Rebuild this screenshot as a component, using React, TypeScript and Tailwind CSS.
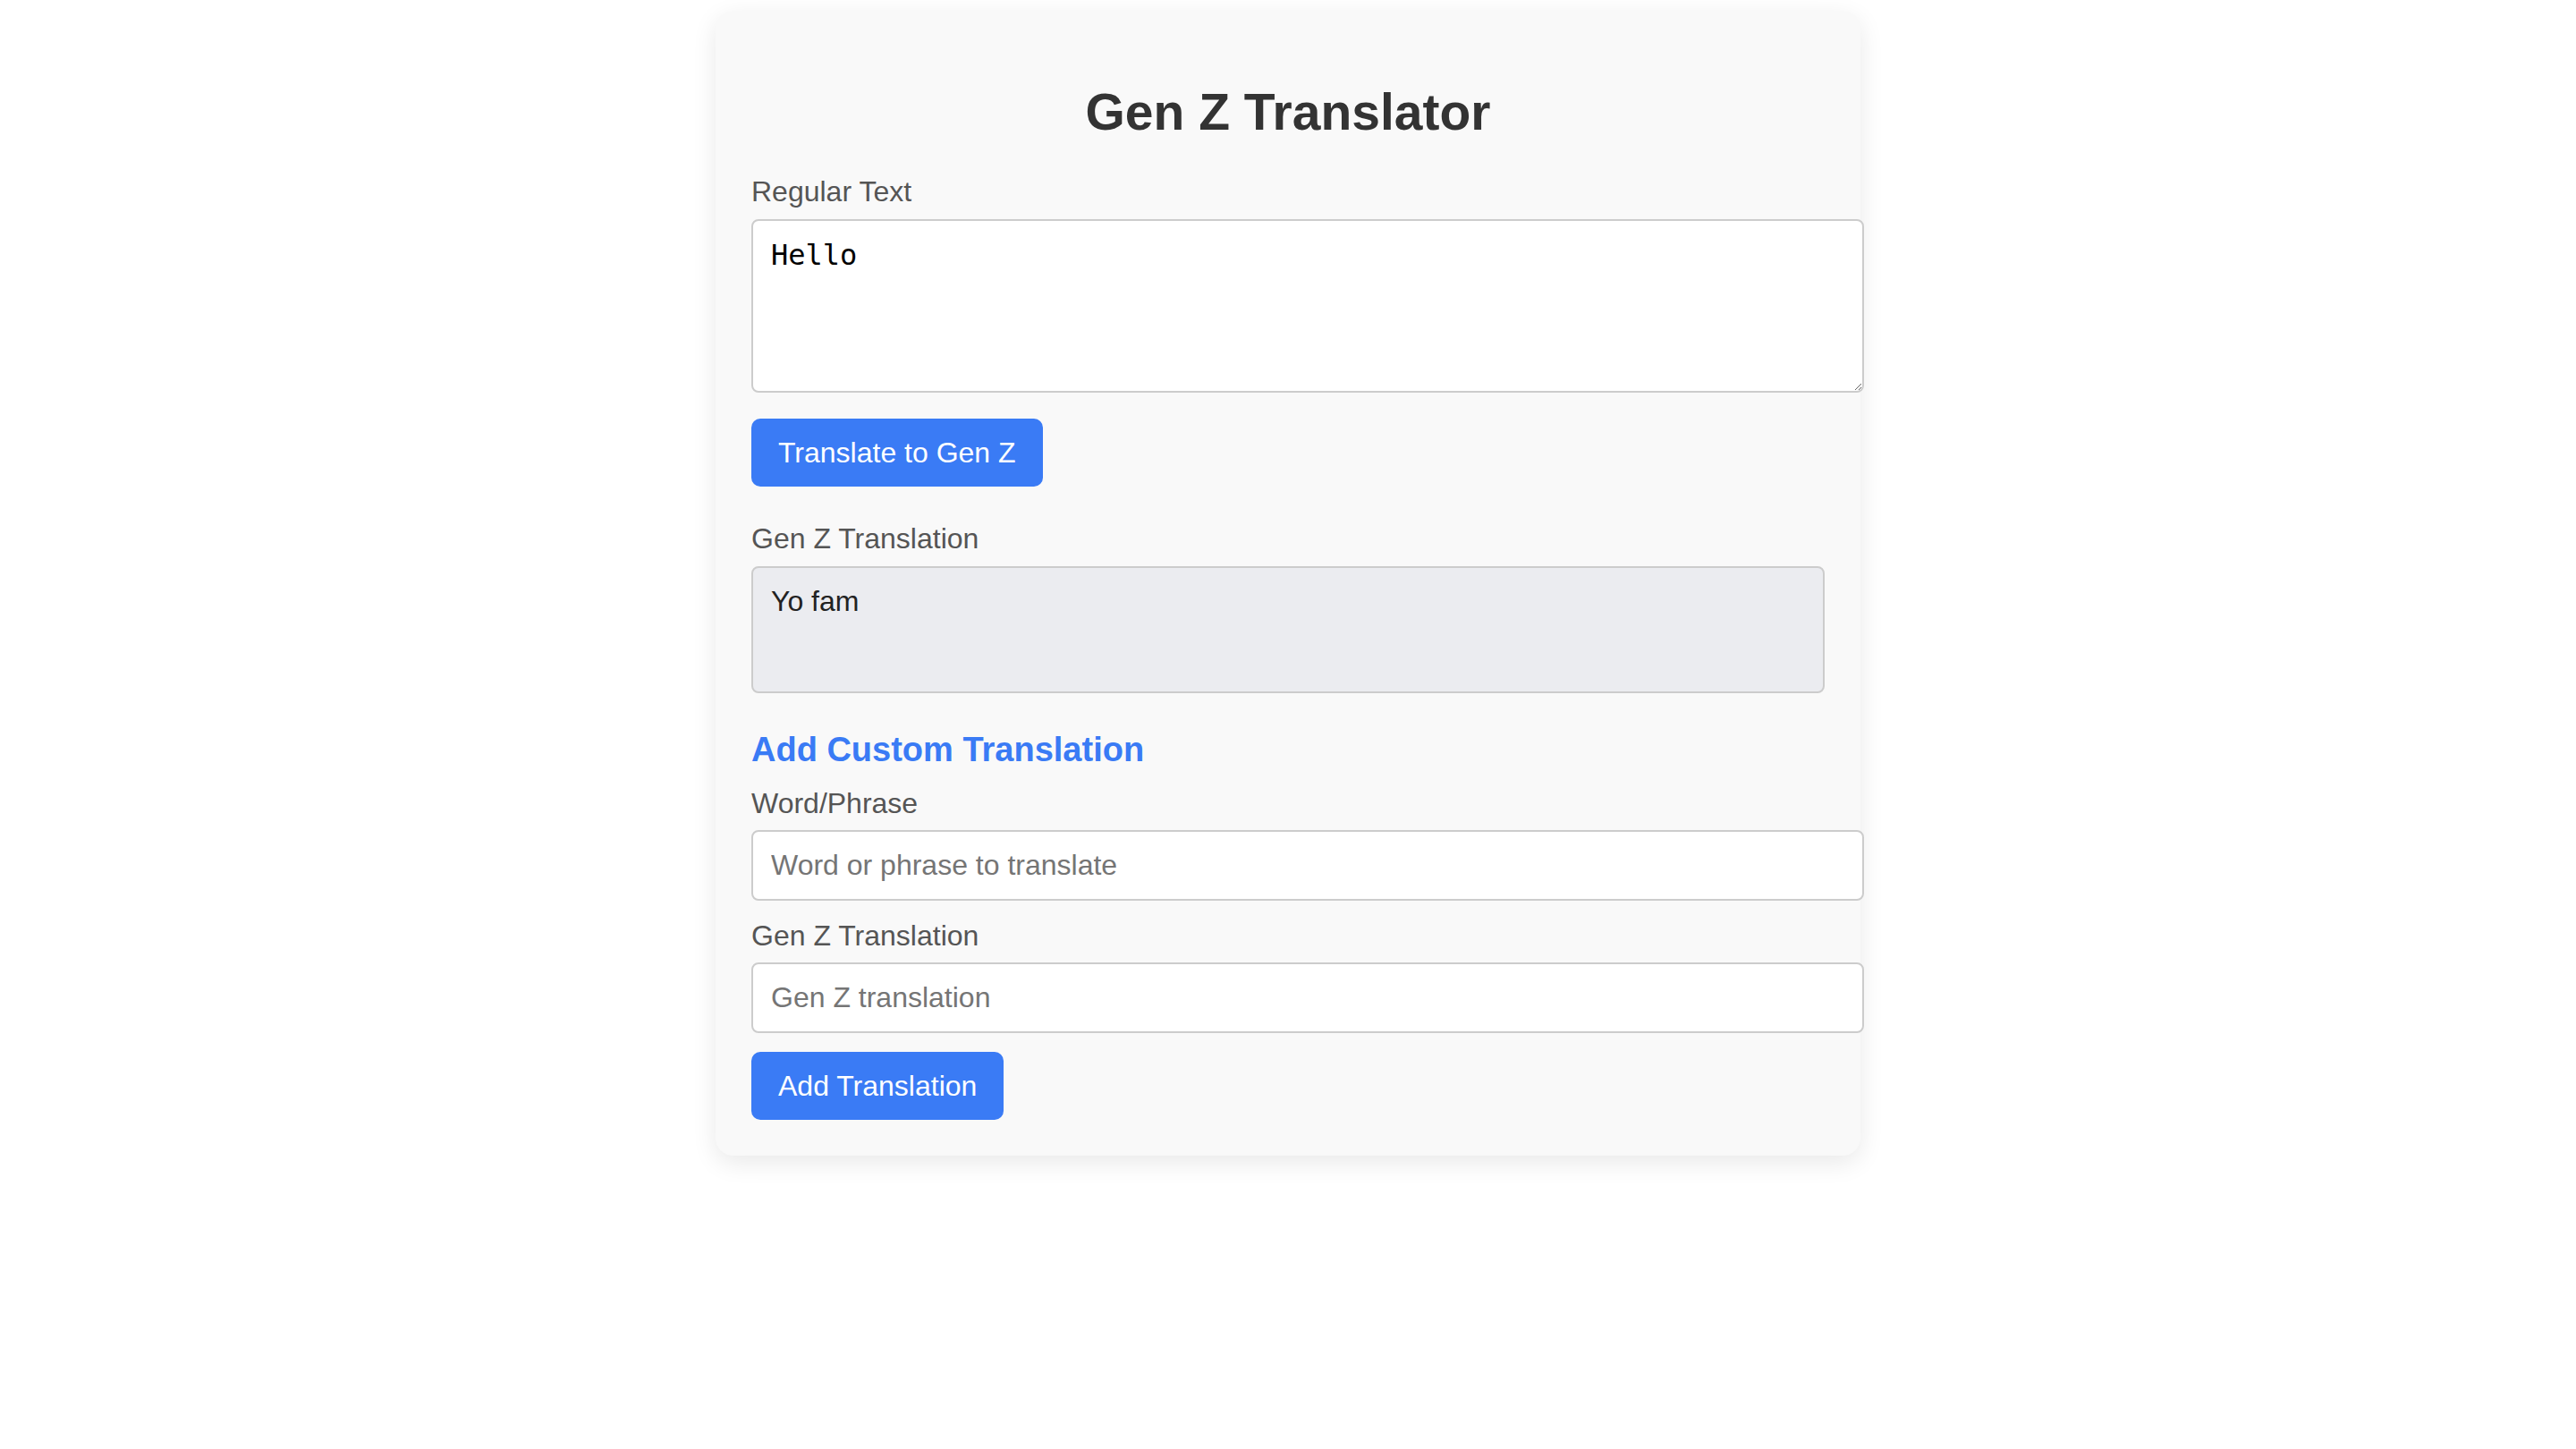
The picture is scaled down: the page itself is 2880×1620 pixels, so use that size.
import React from "react";

export default function App() {
  return (
    <div className="min-h-screen bg-white font-['Liberation_Sans',Arial,sans-serif]">
      <div className="mx-auto mt-[12px] flex w-[1280px] flex-col items-start rounded-[20px] bg-[#f9f9f9] px-[40px] pt-[40px] pb-[40px] shadow-[0_8px_28px_rgba(0,0,0,0.09)]">
        <h1 className="mt-[41px] self-stretch text-center text-[57px] leading-[65px] font-bold text-[#333333]">
          Gen Z Translator
        </h1>

        <label className="mt-[38px] block text-[32px] leading-[37px] text-[#555555]">
          Regular Text
        </label>
        <textarea
          defaultValue="Hello"
          className="mt-[12px] box-border block h-[194px] w-[1244px] shrink-0 rounded-[8px] border-2 border-[#cccccc] bg-white px-[20px] py-[20px] font-['DejaVu_Sans_Mono',monospace] text-[32px] leading-[37px] text-black outline-none"
        />

        <button className="mt-[29px] block h-[76px] rounded-[10px] bg-[#3a7bf5] px-[30px] text-[32px] leading-[36px] text-white">
          Translate to Gen Z
        </button>

        <label className="mt-[40px] block text-[32px] leading-[37px] text-[#555555]">
          Gen Z Translation
        </label>
        <div className="mt-[12px] box-border h-[142px] w-[1200px] rounded-[8px] border-2 border-[#cccccc] bg-[#ebecf0] px-[20px] pt-[19px] text-[32px] leading-[37px] text-[#222222]">
          Yo fam
        </div>

        <h3 className="mt-[41px] text-[38px] leading-[44px] font-bold text-[#3a7bf5]">
          Add Custom Translation
        </h3>

        <label className="mt-[20px] block text-[32px] leading-[37px] text-[#555555]">
          Word/Phrase
        </label>
        <input
          type="text"
          placeholder="Word or phrase to translate"
          className="mt-[11px] box-border block h-[79px] w-[1244px] shrink-0 rounded-[8px] border-2 border-[#cccccc] bg-white px-[20px] text-[32px] text-black outline-none placeholder:text-[#757575]"
        />

        <label className="mt-[21px] block text-[32px] leading-[37px] text-[#555555]">
          Gen Z Translation
        </label>
        <input
          type="text"
          placeholder="Gen Z translation"
          className="mt-[11px] box-border block h-[79px] w-[1244px] shrink-0 rounded-[8px] border-2 border-[#cccccc] bg-white px-[20px] text-[32px] text-black outline-none placeholder:text-[#757575]"
        />

        <button className="mt-[21px] block h-[76px] rounded-[10px] bg-[#3a7bf5] px-[30px] text-[32px] leading-[36px] text-white">
          Add Translation
        </button>
      </div>
    </div>
  );
}
